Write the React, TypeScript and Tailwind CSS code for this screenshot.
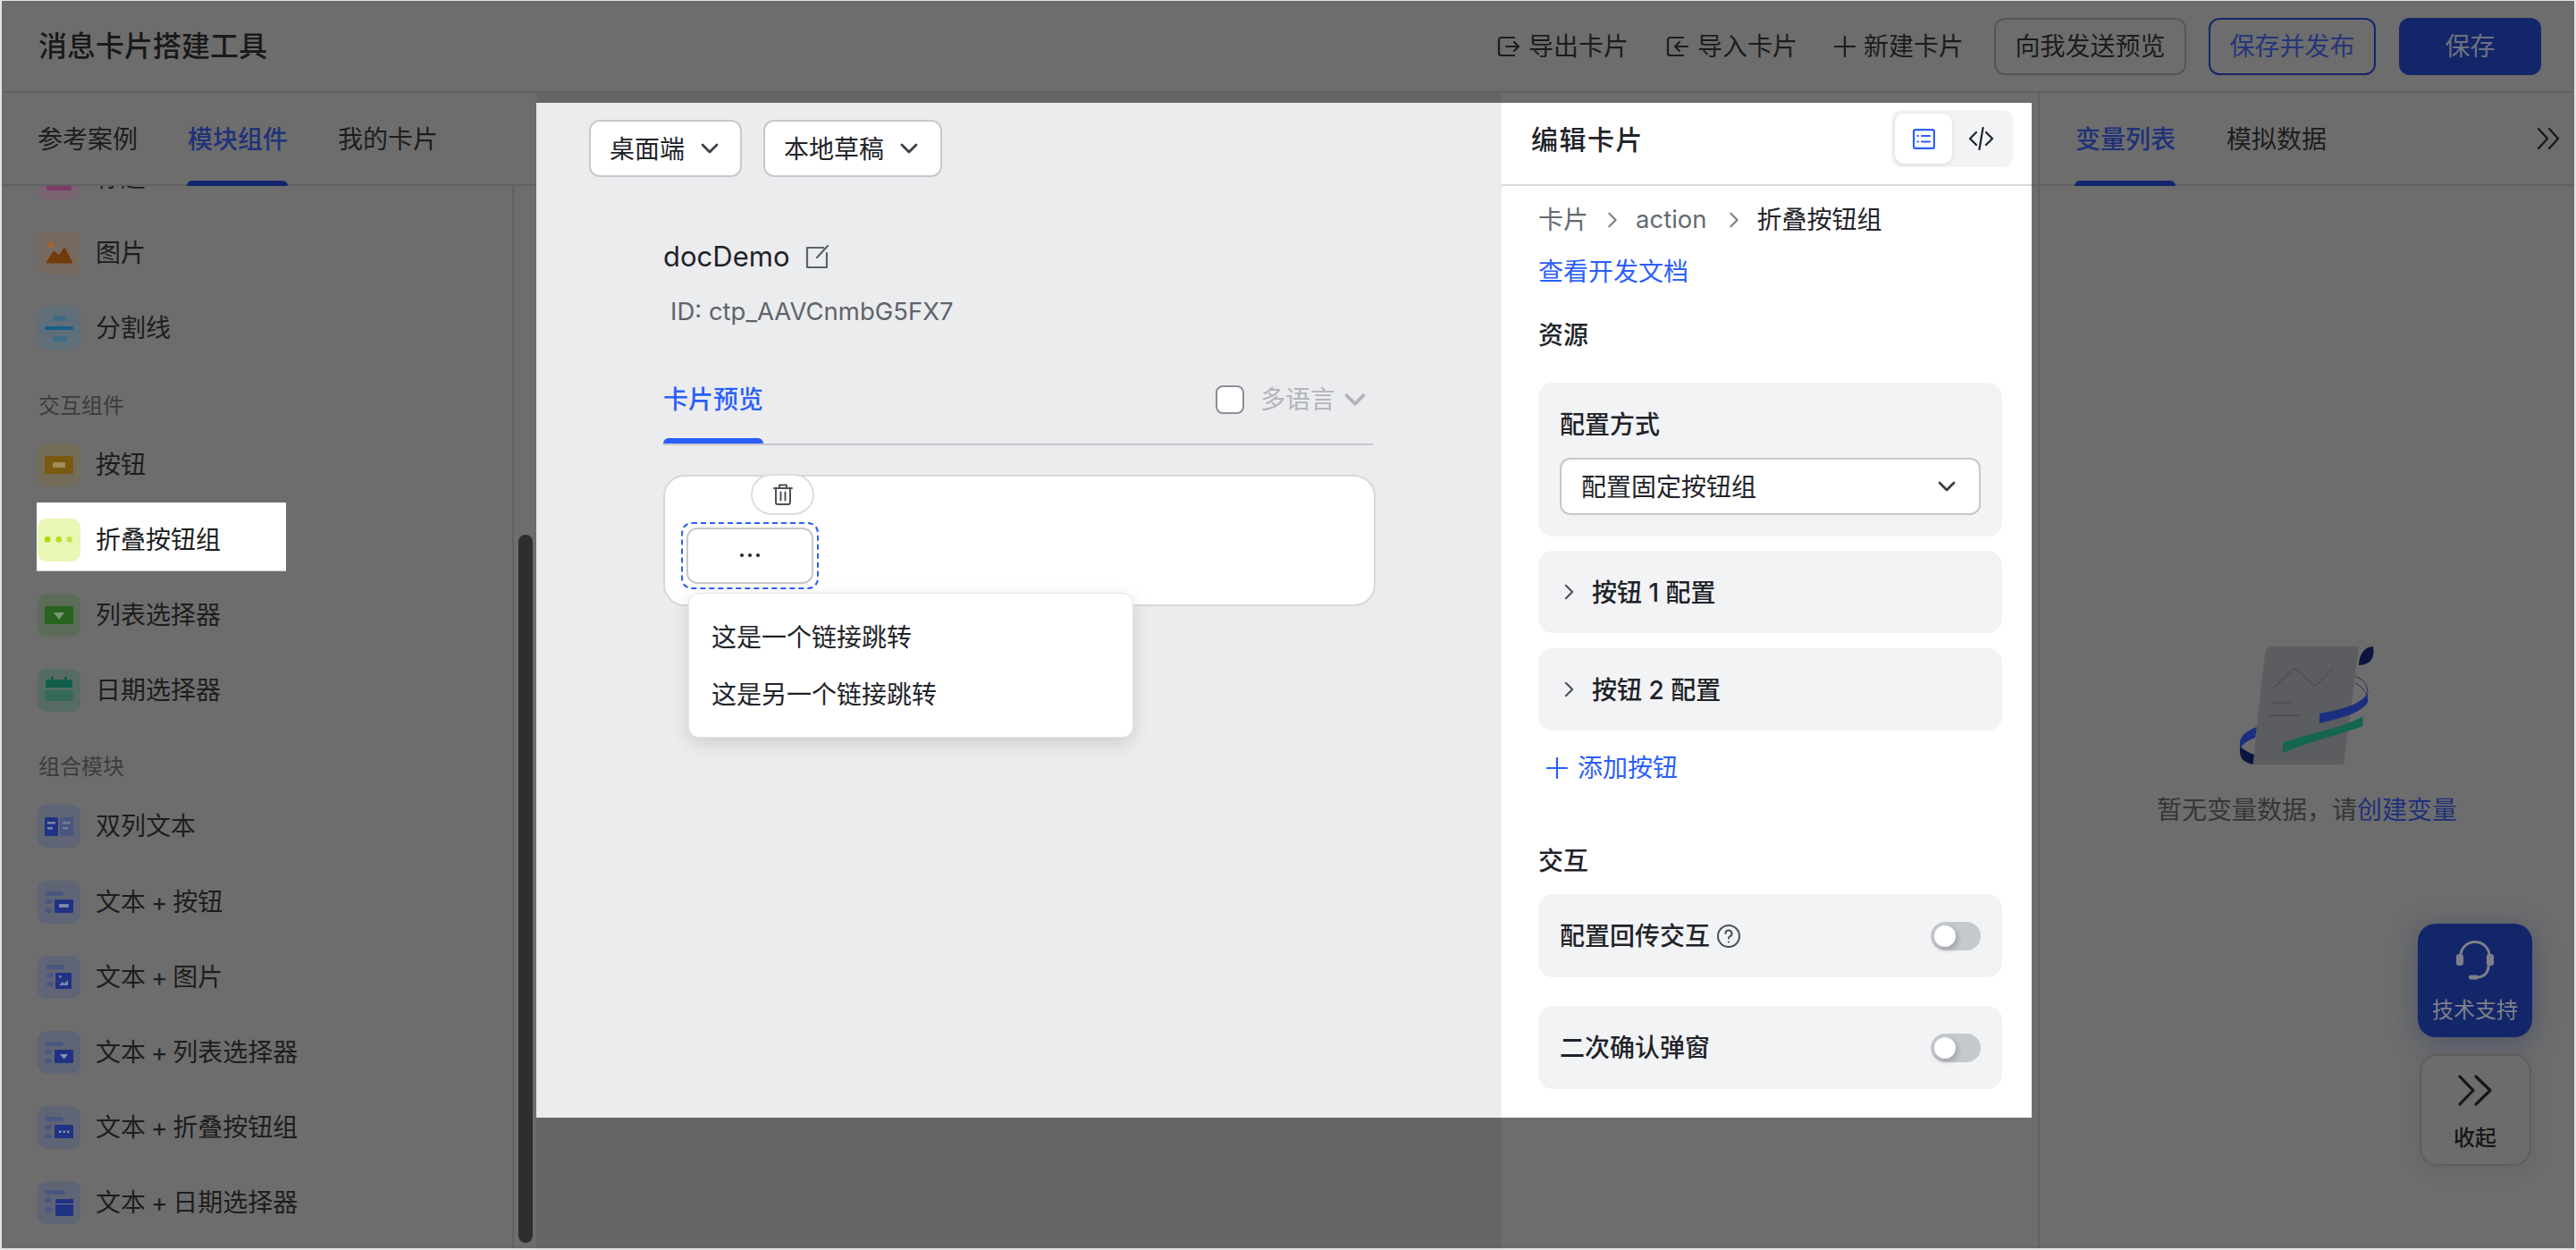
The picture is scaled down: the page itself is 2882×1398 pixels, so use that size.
import React from "react";

const Chev = ({ className = "", sw = 2.4, w = 20, h = 12 }: { className?: string; sw?: number; w?: number; h?: number }) => (
  <svg viewBox="0 0 20 12" width={w} height={h} fill="none" stroke="currentColor" strokeWidth={sw} strokeLinecap="round" strokeLinejoin="round" className={className}>
    <path d="M2 2l8 8 8-8" />
  </svg>
);
const ChevR = ({ w = 12, h = 20, className = "" }: { w?: number; h?: number; className?: string }) => (
  <svg viewBox="0 0 12 20" width={w} height={h} fill="none" stroke="currentColor" strokeWidth="2.4" strokeLinecap="round" strokeLinejoin="round" className={className}>
    <path d="M2 2l8 8-8 8" />
  </svg>
);

const Box = ({ bg, children }: { bg: string; children: React.ReactNode }) => (
  <svg viewBox="0 0 48 48" width="48" height="48" className="shrink-0 relative">
    <rect width="48" height="48" rx="10" fill={bg} />
    {children}
  </svg>
);

const I = {
  title: () => <Box bg="#7a6472"><rect x="10" y="10" width="28" height="28" rx="2" fill="#7e3a66" /></Box>,
  image: () => (
    <Box bg="#766a5f">
      <rect x="12" y="12" width="6" height="6" fill="#a0662e" />
      <path d="M10 35 18 22l6 5 6-9 9 17z" fill="#733a0a" stroke="#733a0a" strokeLinejoin="round" />
    </Box>
  ),
  divider: () => (
    <Box bg="#5f6f7a">
      <rect x="17" y="10" width="16" height="6" rx="2" fill="#3e6b85" />
      <rect x="8" y="22" width="32" height="4" rx="2" fill="#145f87" />
      <rect x="17" y="33" width="16" height="6" rx="2" fill="#3e6b85" />
    </Box>
  ),
  button: () => (
    <Box bg="#736c58">
      <rect x="8" y="14" width="32" height="20" rx="1" fill="#7a5a0f" />
      <rect x="17" y="21" width="14" height="6" rx="1" fill="#a08c5c" />
    </Box>
  ),
  fold: () => (
    <Box bg="#e8f7b4">
      <rect x="8" y="20" width="6.5" height="6.5" rx="2.5" fill="#b2d800" />
      <rect x="20.5" y="20" width="6.5" height="6.5" rx="2.5" fill="#bcdc24" />
      <rect x="32.5" y="20" width="6.5" height="6.5" rx="2.5" fill="#c8e34d" />
    </Box>
  ),
  select: () => (
    <Box bg="#5d6c59">
      <rect x="8" y="14" width="32" height="20" rx="1" fill="#27641f" />
      <path d="M18 21h12l-6 8z" fill="#7d9278" />
    </Box>
  ),
  date: () => (
    <Box bg="#566b63">
      <path d="M9 21v-7a2 2 0 0 1 2-2h4v-3h3v3h12v-3h3v3h4a2 2 0 0 1 2 2v7z" fill="#115f4b" />
      <path d="M8 24h32v10a2 2 0 0 1-2 2H10a2 2 0 0 1-2-2z" fill="#356a5a" />
    </Box>
  ),
  cols: () => (
    <Box bg="#5f6575">
      <rect x="8" y="14" width="15" height="21" rx="1.5" fill="#1f3284" />
      <rect x="25" y="14" width="15" height="21" rx="1.5" fill="#4a5680" />
      <rect x="11" y="19" width="9" height="2.5" fill="#7d86a6" />
      <rect x="11" y="25" width="6" height="2.5" fill="#7d86a6" />
      <rect x="28" y="19" width="9" height="2.5" fill="#737b99" />
      <rect x="28" y="25" width="6" height="2.5" fill="#737b99" />
    </Box>
  ),
  tb: (x = 8, w = 21, y = 12) => (
    <>
      <rect x={x} y={y} width={w} height="5" rx="2.5" fill="#4a5680" />
      <rect x={x} y={y + 9} width="8" height="5" rx="2.5" fill="#4a5680" />
      <rect x={x} y={y + 19} width="8" height="5" rx="2.5" fill="#4a5680" />
    </>
  ),
};
const TBtn = () => (
  <Box bg="#5f6575">
    {I.tb()}
    <rect x="19" y="21" width="21" height="15" rx="1" fill="#1f3284" />
    <rect x="24" y="26" width="11" height="4" rx="1" fill="#7d86a6" />
  </Box>
);
const TImg = () => (
  <Box bg="#5f6575">
    {I.tb(10, 20, 10)}
    <rect x="20" y="19" width="18" height="18" rx="1" fill="#1f3284" />
    <rect x="24" y="22" width="2.5" height="2.5" fill="#7d86a6" />
    <path d="M24 33l4-4 2 2 4-4v6z" fill="#7d86a6" />
  </Box>
);
const TSel = () => (
  <Box bg="#5f6575">
    {I.tb()}
    <rect x="19" y="21" width="21" height="15" rx="1" fill="#1f3284" />
    <path d="M25 26h9l-4.5 5.500z" fill="#8a92ad" />
  </Box>
);
const TFold = () => (
  <Box bg="#5f6575">
    {I.tb()}
    <rect x="19" y="21" width="21" height="15" rx="1" fill="#1f3284" />
    <rect x="24" y="27.5" width="2.5" height="2.5" fill="#8a92ad" />
    <rect x="28.5" y="27.5" width="2.5" height="2.5" fill="#8a92ad" />
    <rect x="33" y="27.5" width="2.5" height="2.5" fill="#8a92ad" />
  </Box>
);
const TDate = () => (
  <Box bg="#5f6575">
    {I.tb(8, 23, 10)}
    <rect x="20" y="20" width="20" height="19" rx="1" fill="#1f3284" />
    <rect x="20" y="25" width="20" height="1" fill="#6d7596" />
  </Box>
);

type Row = { label: string; Icon: React.FC; spot?: boolean };
const SideRow = ({ label, Icon, spot }: Row) => (
  <div className="relative h-[84.2px] pl-[40px] flex items-center gap-[17px] text-[28px] text-[#1d1d1d] [word-spacing:-2px]">
    {spot && <div className="absolute left-[39px] top-0 w-[279px] h-[77px] bg-white border-b border-[#c9c9c9]" />}
    <Icon />
    <span className="relative whitespace-nowrap">{label}</span>
  </div>
);
const SideHead = ({ label }: { label: string }) => (
  <div className="h-[68px] pl-[41px] pt-[27px] text-[24px] leading-[34px] text-[#3c3c3c]">{label}</div>
);

const Tab = ({ label, active, activeClass, color }: { label: string; active?: boolean; activeClass?: string; color?: string }) => (
  <div className={"relative h-full pt-[2px] flex items-center text-[28px] " + (active ? activeClass : color)}>
    {label}
    {active && <div className="absolute -left-px right-0 -bottom-[2px] h-[6px] rounded-t-[6px] bg-[#14266a]" />}
  </div>
);

const ExportIcon = ({ dir }: { dir: "out" | "in" }) => (
  <svg viewBox="0 0 26 24" width="26" height="24" fill="none" stroke="#1c1c1c" strokeWidth="2.2" strokeLinecap="round" strokeLinejoin="round">
    <path d="M19 2H4.500A2.500 2.500 0 0 0 2 4.500v15A2.500 2.500 0 0 0 4.500 22H19" />
    {dir === "out" ? <path d="M10 12h14M19 7l5 5-5 5" /> : <path d="M24 12H10M15 7l-5 5 5 5" />}
  </svg>
);

const TopAction = ({ icon, label }: { icon: React.ReactNode; label: string }) => (
  <div className="flex items-center gap-[9px] text-[28px] text-[#1c1c1c]">
    {icon}
    <span>{label}</span>
  </div>
);

const Dropdown = ({ label, w }: { label: string; w: string }) => (
  <div className={"h-[64px] rounded-[12px] border-2 border-[#c6c8cc] bg-white pl-[21px] flex items-center gap-[18px] text-[28px] text-[#1f2329] " + w}>
    <span className="pt-[2px]">{label}</span>
    <Chev className="text-[#3a3f46]" sw={2.8} />
  </div>
);

const Toggle = () => (
  <div className="w-[56px] h-[32px] rounded-full bg-[#c5c8cd] p-[4px]">
    <div className="w-[24px] h-[24px] rounded-full bg-white shadow-[2px_3px_6px_rgba(0,0,0,0.22)]" />
  </div>
);

const Collapse = ({ label, h }: { label: string; h: string }) => (
  <div className={"rounded-[16px] bg-[#f2f3f5] pl-[29px] flex items-center gap-[20px] text-[28px] font-medium text-[#1f2329] " + h}>
    <ChevR w={11} h={18} className="text-[#4b5058]" />
    <span className="pt-[2px]">{label}</span>
  </div>
);

export default function App() {
  return (
    <div className="relative w-[2882px] h-[1398px] overflow-hidden flex flex-col bg-[#6d6d6d] border-x-2 border-b-2 border-t border-[#e4e4e4] [font-family:Inter,'Noto_Sans_CJK_SC',sans-serif]">
      {/* top bar */}
      <header className="h-[103px] shrink-0 border-b-2 border-[#616161] pl-[41px] pr-[37px] flex items-center justify-between">
        <h1 className="text-[32px] font-medium text-[#191919]">消息卡片搭建工具</h1>
        <div className="flex items-center">
          <TopAction icon={<ExportIcon dir="out" />} label="导出卡片" />
          <div className="ml-[42px]"><TopAction icon={<ExportIcon dir="in" />} label="导入卡片" /></div>
          <div className="ml-[41px]">
            <TopAction
              icon={
                <svg viewBox="0 0 24 24" width="24" height="24" fill="none" stroke="#1c1c1c" strokeWidth="2.2" strokeLinecap="round">
                  <path d="M12 1v22M1 12h22" />
                </svg>
              }
              label="新建卡片"
            />
          </div>
          <div className="ml-[34px] w-[215px] h-[64px] rounded-[12px] border-2 border-[#565656] flex items-center justify-center text-[28px] text-[#1c1c1c]">向我发送预览</div>
          <div className="ml-[25px] w-[187px] h-[64px] rounded-[12px] border-2 border-[#14266a] flex items-center justify-center text-[28px] text-[#25357a]">保存并发布</div>
          <div className="ml-[26px] w-[159px] h-[64px] rounded-[12px] bg-[#14266a] flex items-center justify-center text-[28px] text-[#6f7280]">保存</div>
        </div>
      </header>

      <div className="flex-1 flex min-h-0">
        {/* left panel */}
        <aside className="w-[598px] shrink-0 flex flex-col">
          <div className="h-[104px] shrink-0 border-b-2 border-[#616161] pl-[40px] flex gap-[56px]">
            <Tab label="参考案例" color="text-[#1d1d1d]" />
            <Tab label="模块组件" active activeClass="text-[#1f3179] font-medium" />
            <Tab label="我的卡片" color="text-[#1d1d1d]" />
          </div>
          <div className="flex-1 flex min-h-0 overflow-hidden">
            <div className="w-[573px] shrink-0 border-r-2 border-[#616161]">
              <div className="-mt-[51px]">
                <SideRow label="标题" Icon={I.title} />
                <SideRow label="图片" Icon={I.image} />
                <SideRow label="分割线" Icon={I.divider} />
                <SideHead label="交互组件" />
                <SideRow label="按钮" Icon={I.button} />
                <SideRow label="折叠按钮组" Icon={I.fold} spot />
                <SideRow label="列表选择器" Icon={I.select} />
                <SideRow label="日期选择器" Icon={I.date} />
                <SideHead label="组合模块" />
                <SideRow label="双列文本" Icon={I.cols} />
                <SideRow label="文本 + 按钮" Icon={TBtn} />
                <SideRow label="文本 + 图片" Icon={TImg} />
                <SideRow label="文本 + 列表选择器" Icon={TSel} />
                <SideRow label="文本 + 折叠按钮组" Icon={TFold} />
                <SideRow label="文本 + 日期选择器" Icon={TDate} />
              </div>
            </div>
            <div className="flex-1 pl-[5px]">
              <div className="mt-[390px] w-[16px] h-[792px] rounded-full bg-[#2e2e2e]" />
            </div>
          </div>
        </aside>

        {/* canvas behind the modal */}
        <main className="w-[1080px] shrink-0 bg-[#646567]" />

        {/* edit panel behind the modal */}
        <section className="w-[600px] shrink-0 flex flex-col">
          <div className="h-[104px] shrink-0 border-b-2 border-[#616161]" />
        </section>

        {/* right panel */}
        <aside className="flex-1 border-l-2 border-[#616161] flex flex-col">
          <div className="h-[104px] shrink-0 border-b-2 border-[#616161] pl-[40px] pr-[15px] flex items-stretch">
            <Tab label="变量列表" active activeClass="text-[#1f3179] font-medium" />
            <div className="w-[57px]" />
            <Tab label="模拟数据" color="text-[#1d1d1d]" />
            <div className="ml-auto flex items-center">
              <svg viewBox="0 0 28 26" width="28" height="26" fill="none" stroke="#1a1a1a" strokeWidth="2.4" strokeLinecap="round" strokeLinejoin="round">
                <path d="M3 2l10 11L3 24M15 2l10 11-10 11" />
              </svg>
            </div>
          </div>
          <div className="flex-1 flex flex-col items-center pt-[515px]">
            <svg viewBox="0 0 150 132" width="150" height="132">
              <path d="M38 0H133L116 132H14.500L28 8Q29 0 38 0z" fill="#5c5d60" />
              <path d="M133 21C133 9 140 0 149 0 151 10 148 21 133 21z" fill="#0c1440" />
              <path d="M129 33.500C137 36 143 42 143 52M129 41C135 44 140 49 142 55" fill="none" stroke="#0c1440" strokeWidth="0.7" />
              <path d="M89 75C110 71 135 66 143 52V62C138 74 110 81 89 86z" fill="#1a2f80" />
              <path d="M48 108C75 97 115 92 137.500 78V89C115 98 75 107 48 119z" fill="#14664e" />
              <path d="M19 90C8 94 0 100 0 108V115C3 108 10 105 17 102z" fill="#1a2f80" />
              <path d="M0 112C5 116 10 119 16 121L14.500 132C5 130 0 125 0 118z" fill="#0c1440" />
              <path d="M38 46L58 27Q61 24 64 26L80 41Q84 45 88 41L104 24M35 63H56.500M33 77H67" fill="none" stroke="#3e3f42" strokeWidth="0.8" />
            </svg>
            <p className="mt-[33px] text-[28px] leading-[36px] text-[#363636] whitespace-nowrap">
              暂无变量数据，请<span className="text-[#1f3179]">创建变量</span>
            </p>
          </div>
        </aside>
      </div>

      {/* floating buttons */}
      <div className="absolute left-[2703px] top-[1032px] w-[128px] flex flex-col items-center gap-[19px]">
        <div className="w-[128px] h-[127px] rounded-[20px] bg-[#14266a] shadow-[0_6px_30px_rgba(20,38,106,0.35)] flex flex-col items-center pt-[19px] text-[24px] text-[#7f8088]">
          <svg viewBox="0 0 44 44" width="44" height="44" fill="none" stroke="#7f8088" strokeWidth="3" strokeLinecap="round">
            <path d="M6 17A16 15.500 0 0 1 38 17" />
            <rect x="1" y="15" width="8" height="13" rx="3" fill="#7f8088" stroke="none" />
            <rect x="35" y="15" width="8" height="13" rx="3" fill="#7f8088" stroke="none" />
            <path d="M37 28C37 36 32 41 24 41" />
            <rect x="15" y="38.5" width="11" height="5" rx="2.5" fill="#7f8088" stroke="none" />
          </svg>
          <span className="mt-[16px] leading-[36px]">技术支持</span>
        </div>
        <div className="w-[125px] h-[125px] rounded-[20px] border-2 border-[#5f5f5f] bg-[#6c6c6c] shadow-[0_4px_24px_rgba(0,0,0,0.08)] flex flex-col items-center pt-[21px] text-[24px] font-medium text-[#161616]">
          <svg viewBox="0 0 38 35" width="38" height="35" fill="none" stroke="#161616" strokeWidth="3.2" strokeLinecap="round" strokeLinejoin="round">
            <path d="M2 2l15 15.500L2 33M20 2l16 15.500L20 33" />
          </svg>
          <span className="mt-[18px] leading-[36px]">收起</span>
        </div>
      </div>

      {/* modal */}
      <div className="absolute left-[598px] top-[114px] w-[1673px] h-[1135px] flex overflow-hidden">
        <div className="w-[1080px] shrink-0 bg-[#ebecee] pl-[59px] pt-[19px]">
          <div className="flex gap-[24px]">
            <Dropdown label="桌面端" w="w-[171px]" />
            <Dropdown label="本地草稿" w="w-[200px]" />
          </div>
          <div className="ml-[83px] w-[797px]">
            <div className="mt-[69px] h-[40px] flex items-center gap-[18px] text-[31px] text-[#1f2329]">
              <span>docDemo</span>
              <svg viewBox="0 0 28 28" width="28" height="28" fill="none" stroke="#5d6168" strokeWidth="2.2" strokeLinecap="round" strokeLinejoin="round">
                <path d="M20 4H2v22h22V10M13 15L25 2" />
              </svg>
            </div>
            <div className="mt-[22px] h-[40px] pl-[8px] flex items-center text-[27.5px] text-[#5f636b]">ID: ctp_AAVCnmbG5FX7</div>
            <div className="mt-[41px] w-[794px] h-[88px] border-b-2 border-[#c5c7cb] flex justify-between">
              <div className="relative h-[74px] flex items-center text-[28px] font-medium text-[#2b5ffb]">
                卡片预览
                <div className="absolute left-0 right-0 top-[80px] h-[6px] rounded-t-[6px] bg-[#2b5ffb]" />
              </div>
              <div className="h-[74px] flex items-center text-[28px] text-[#b2b4b9]">
                <div className="ml-[2px] w-[32px] h-[32px] rounded-[8px] border-2 border-[#8b8f96] bg-white" />
                <span className="ml-[18px]">多语言</span>
                <Chev className="ml-[10px] mr-[8px] text-[#b2b4b9]" sw={3.2} w={24} h={14} />
              </div>
            </div>
            <div className="relative mt-[33px] w-[797px] h-[147px] rounded-[24px] border-2 border-[#d6d8dc] bg-white pl-[18px] pt-[51px]">
              <div className="w-[154px] h-[75px] rounded-[12px] border-2 border-dashed border-[#2b5ffb] p-[4px]">
                <div className="h-full rounded-[12px] border-2 border-[#c6c8cc] flex items-center justify-center gap-[5px] pb-[2px]">
                  <span className="w-[4px] h-[4px] rounded-full bg-[#1f2329]" />
                  <span className="w-[4px] h-[4px] rounded-full bg-[#1f2329]" />
                  <span className="w-[4px] h-[4px] rounded-full bg-[#1f2329]" />
                </div>
              </div>
              <div className="absolute left-[96px] -top-[3px] w-[71px] h-[46px] rounded-full border-2 border-[#dcdee1] bg-white flex items-center justify-center">
                <svg viewBox="0 0 22 24" width="22" height="24" fill="none" stroke="#4b5058" strokeWidth="2" strokeLinecap="round" strokeLinejoin="round">
                  <path d="M1 5h20M7 5V1.500h8V5M3 5v16a2 2 0 0 0 2 2h12a2 2 0 0 0 2-2V5M8.500 9.500v9M13.500 9.500v9" />
                </svg>
              </div>
              <div className="absolute left-[26px] top-[130px] w-[498px] h-[162px] rounded-[12px] border border-[#e4e5e7] bg-white shadow-[0_6px_20px_rgba(0,0,0,0.13)] pl-[25px] pt-[29px] text-[28px] text-[#1f2329] z-10">
                <div className="h-[40px] flex items-center">这是一个链接跳转</div>
                <div className="mt-[24px] h-[40px] flex items-center">这是另一个链接跳转</div>
              </div>
            </div>
          </div>
        </div>

        <div className="flex-1 bg-white flex flex-col">
          <div className="h-[93px] shrink-0 border-b-2 border-[#d9dadc] pl-[33px] pr-[21px] pb-[8px] flex items-center justify-between">
            <h2 className="text-[30px] tracking-[1.5px] font-medium text-[#1f2329]">编辑卡片</h2>
            <div className="w-[136px] h-[64px] -mt-[3px] rounded-[12px] bg-[#f2f3f5] p-[4px] flex items-center">
              <div className="w-[64px] h-[56px] rounded-[10px] bg-white shadow-[0_1px_4px_rgba(0,0,0,0.12)] flex items-center justify-center">
                <svg viewBox="0 0 25 23" width="25" height="23" fill="none" stroke="#2b5ffb" strokeWidth="2.2" strokeLinecap="round" strokeLinejoin="round">
                  <rect x="1.1" y="1.1" width="22.8" height="20.8" rx="2" />
                  <path d="M10 8h9M10 14.500h9M5.500 8h.5M5.500 14.500h.5" />
                </svg>
              </div>
              <div className="flex-1 flex items-center justify-center">
                <svg viewBox="0 0 29 26" width="29" height="26" fill="none" stroke="#1f2329" strokeWidth="2.2" strokeLinecap="round" strokeLinejoin="round">
                  <path d="M9 6l-7 7 7 7M20 6l7 7-7 7M16.500 1l-4 24" />
                </svg>
              </div>
            </div>
          </div>
          <div className="pl-[41px] pr-[33px] pt-[18px] text-[28px] text-[#1f2329]">
            <div className="h-[40px] flex items-center">
              <span className="text-[#646a73]">卡片</span>
              <ChevR w={12} h={18} className="ml-[21px] text-[#7b8089]" />
              <span className="ml-[20px] text-[27.5px] text-[#646a73]">action</span>
              <ChevR w={12} h={18} className="ml-[24px] text-[#7b8089]" />
              <span className="ml-[20px]">折叠按钮组</span>
            </div>
            <div className="mt-[18px] h-[40px] flex items-center text-[#2b5ffb]">查看开发文档</div>
            <div className="mt-[31px] h-[40px] flex items-center font-medium">资源</div>
            <div className="mt-[33px] h-[172px] rounded-[16px] bg-[#f2f3f5] px-[24px] pt-[27px]">
              <div className="h-[40px] flex items-center font-medium">配置方式</div>
              <div className="mt-[17px] h-[64px] rounded-[12px] border-2 border-[#c5c7cb] bg-white pl-[22px] pr-[26px] flex items-center justify-between">
                <span className="pt-[1px]">配置固定按钮组</span>
                <Chev className="text-[#3a3f46]" sw={2.8} />
              </div>
            </div>
            <div className="mt-[16px]"><Collapse label="按钮 1 配置" h="h-[92px]" /></div>
            <div className="mt-[17px]"><Collapse label="按钮 2 配置" h="h-[92px]" /></div>
            <div className="mt-[22px] h-[40px] pl-[9px] flex items-center gap-[11px] text-[#2b5ffb]">
              <svg viewBox="0 0 24 24" width="24" height="24" fill="none" stroke="#2b5ffb" strokeWidth="2.2" strokeLinecap="round">
                <path d="M12 1v22M1 12h22" />
              </svg>
              <span>添加按钮</span>
            </div>
            <div className="mt-[64px] h-[40px] flex items-center font-medium">交互</div>
            <div className="mt-[17px] h-[93px] rounded-[16px] bg-[#f2f3f5] px-[24px] flex items-center justify-between">
              <div className="flex items-center gap-[8px] font-medium">
                <span>配置回传交互</span>
                <svg viewBox="0 0 26 26" width="26" height="26" fill="none" stroke="#4b5058" strokeWidth="2" strokeLinecap="round" strokeLinejoin="round">
                  <circle cx="13" cy="13" r="12" />
                  <path d="M9.500 10a3.500 3.500 0 1 1 5 3.200c-1 .5-1.500 1.300-1.500 2.300" />
                  <path d="M13 19.500v.1" />
                </svg>
              </div>
              <Toggle />
            </div>
            <div className="mt-[32px] h-[93px] rounded-[16px] bg-[#f2f3f5] px-[24px] flex items-center justify-between">
              <span className="font-medium">二次确认弹窗</span>
              <Toggle />
            </div>
          </div>
        </div>
      </div>
    </div>
  );
}
